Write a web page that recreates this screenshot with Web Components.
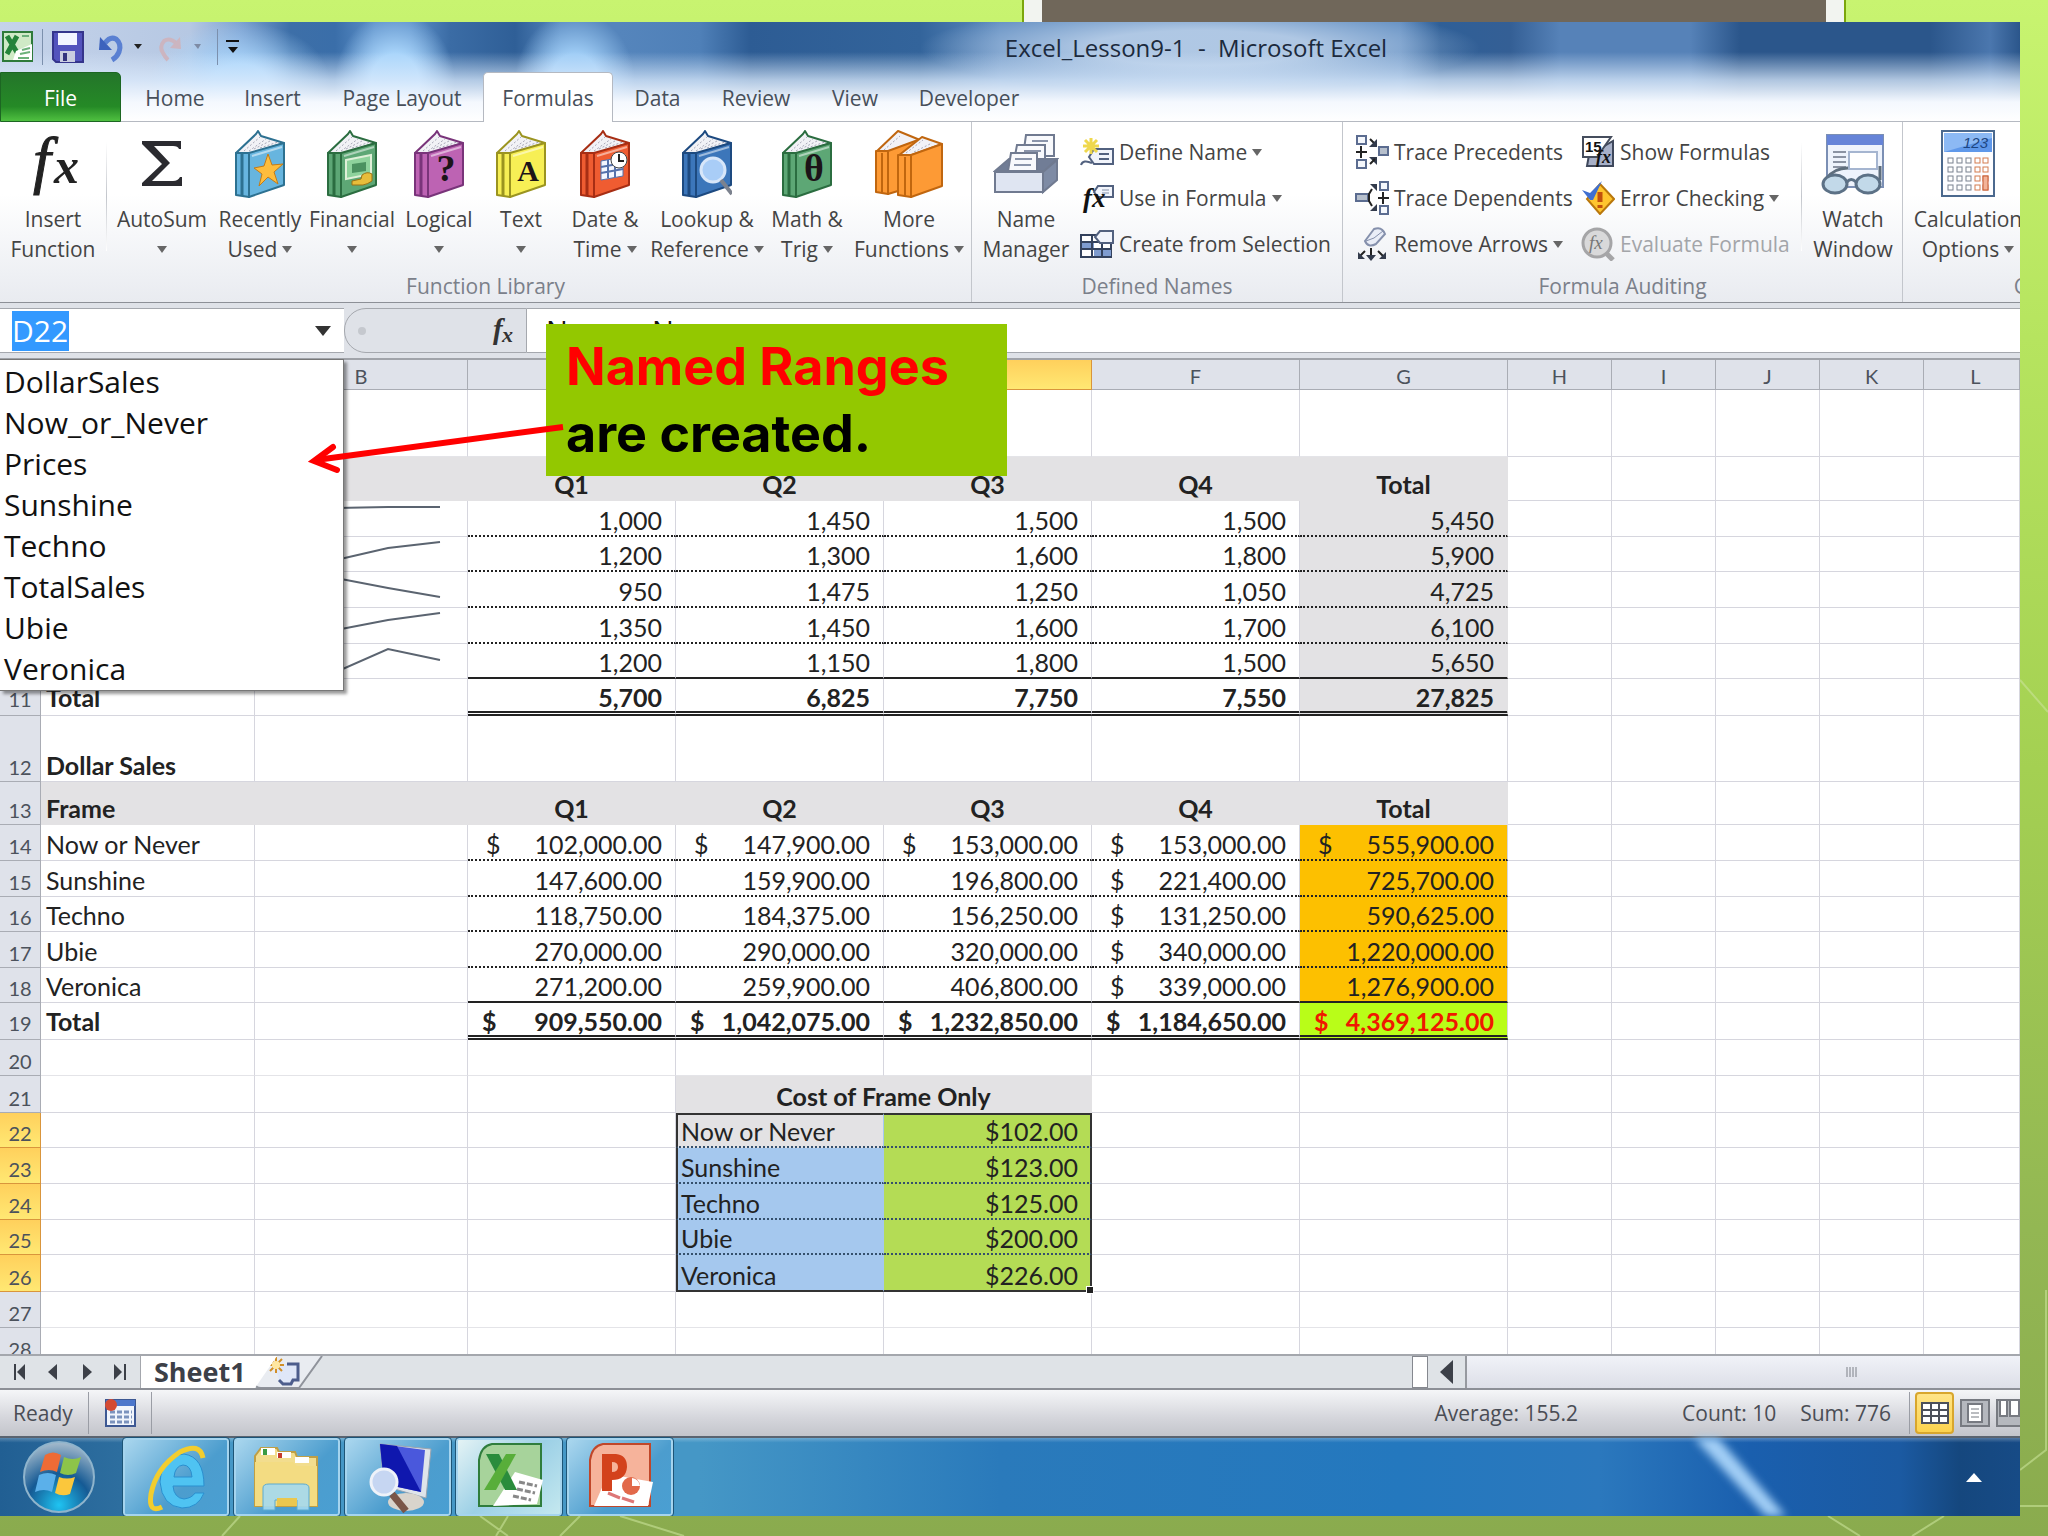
<!DOCTYPE html>
<html lang="en">
<head>
<meta charset="utf-8">
<title>Excel_Lesson9-1 - Microsoft Excel</title>
<style>
    body {
        margin: 0;
        font-family: "Open Sans", "Noto Sans", sans-serif;
        font-size: 21px;
        color: #444;
    }
</style>
</head>
<body>
<slide-stage>
    <title-bar></title-bar>
    <ribbon-panel>
        <ribbon-group label="Function Library">
            <ribbon-button icon="fx" label="Insert|Function" style="width: 106px"></ribbon-button>
            <ribbon-divider></ribbon-divider>
            <ribbon-button icon="sum" label="AutoSum|" menu style="width: 106px"></ribbon-button>
            <ribbon-button icon="recent" label="Recently|Used" menu style="width: 90px"></ribbon-button>
            <ribbon-button icon="financial" label="Financial|" menu style="width: 94px"></ribbon-button>
            <ribbon-button icon="logical" label="Logical|" menu style="width: 80px"></ribbon-button>
            <ribbon-button icon="text" label="Text|" menu style="width: 84px"></ribbon-button>
            <ribbon-button icon="date" label="Date &amp;|Time" menu style="width: 84px"></ribbon-button>
            <ribbon-button icon="lookup" label="Lookup &amp;|Reference" menu style="width: 120px"></ribbon-button>
            <ribbon-button icon="math" label="Math &amp;|Trig" menu style="width: 80px"></ribbon-button>
            <ribbon-button icon="more" label="More|Functions" menu style="width: 124px"></ribbon-button>
        </ribbon-group>
        <ribbon-group label="Defined Names">
            <ribbon-button icon="names" label="Name|Manager" style="width: 108px"></ribbon-button>
            <command-stack style="width: 262px">
                <ribbon-command icon="defineName" menu>Define Name</ribbon-command>
                <ribbon-command icon="useFormula" menu>Use in Formula</ribbon-command>
                <ribbon-command icon="createName">Create from Selection</ribbon-command>
            </command-stack>
        </ribbon-group>
        <ribbon-group label="Formula Auditing">
            <command-stack style="width: 238px; padding-left: 12px">
                <ribbon-command icon="precedents">Trace Precedents</ribbon-command>
                <ribbon-command icon="dependents">Trace Dependents</ribbon-command>
                <ribbon-command icon="removeArrows" menu>Remove Arrows</ribbon-command>
            </command-stack>
            <command-stack style="width: 220px">
                <ribbon-command icon="showFormulas">Show Formulas</ribbon-command>
                <ribbon-command icon="errorCheck" menu>Error Checking</ribbon-command>
                <ribbon-command icon="evaluate" disabled>Evaluate Formula</ribbon-command>
            </command-stack>
            <ribbon-divider></ribbon-divider>
            <ribbon-button icon="watch" label="Watch|Window" style="width: 98px"></ribbon-button>
        </ribbon-group>
        <ribbon-group label="Calculation" style="width: 330px">
            <ribbon-button icon="calc" label="Calculation|Options" menu style="width: 130px"></ribbon-button>
        </ribbon-group>
    </ribbon-panel>
    <formula-bar></formula-bar>
    <work-sheet></work-sheet>
    <sheet-tabs></sheet-tabs>
    <status-bar></status-bar>
    <task-bar></task-bar>
    <slide-callout slot="overlay"><span slot="lead">Named Ranges</span> are created.</slide-callout>
</slide-stage>

<script>
// Book icon shared by the function library buttons
const book = (front, side, inner = '') => `
    <svg width="50" height="68" viewBox="-1 -1 50 68">
        <path d="M0 22 20 3 22 0 25 5 48 12 14 23Z" fill="#f2f2f6" stroke="${side}" stroke-width="2" stroke-linejoin="round"/>
        <path d="M8 20 24 6M13 20 30 8M18 18 36 9M24 17 42 11" stroke="#a9a9b8" stroke-dasharray="2 2"/>
        <path d="M0 22H13V66L0 64Z" fill="${front}" stroke="${side}" stroke-width="2" stroke-linejoin="round"/>
        <path d="M6 23V65" stroke="${side}" stroke-width="3"/>
        <path d="M13 22 48 12V54L13 66Z" fill="${front}" stroke="${side}" stroke-width="2" stroke-linejoin="round"/>
        <path d="M16 25 46 16" stroke="#fff" stroke-opacity=".5" stroke-width="2"/>
        ${inner}
    </svg>`;

const glyph = (ch, size = 30) =>
    `<text x="31" y="50" font-family="Liberation Serif, serif" font-weight="bold" font-size="${size}" text-anchor="middle" fill="#1c1418">${ch}</text>`;

const ICONS = {
    fx: `<svg width="64" height="68" viewBox="0 0 64 68"><text x="12" y="51" font-family="Liberation Serif, serif" font-style="italic" font-size="64" fill="#222" stroke="#222" stroke-width="1">f</text><text x="33" y="53" font-family="Liberation Serif, serif" font-style="italic" font-weight="bold" font-size="50" fill="#222">x</text></svg>`,
    sum: `<svg width="44" height="68" viewBox="0 0 44 68"><path d="M2 11H41V19H39Q38 16 33 16H14L30 33 12 51H33Q38 51 40 47H42V56H2V53L22 34 2 14Z" fill="#2b2b30"/></svg>`,
    recent: book('#67b5df', '#2d7191', '<path d="m32 23 4 11 11-1-9 8 4 12-10-7-9 9 3-12-8-6 10-2z" fill="#fdbd3d" stroke="#c27b18"/>'),
    financial: book('#5da775', '#2b6d40', '<path d="M18 29 43 24V43L18 48Z" fill="#8ed29c" stroke="#dff0d8" stroke-width="2"/><path d="M24 33 38 31V40L24 42Z" fill="#4b9160"/><path d="M34 44q5-4 10-1v7q-4 3-9 4H24v-4l9-2z" fill="#e8bd3b" stroke="#9b7115"/>'),
    logical: book('#bd63b3', '#79347a', glyph('?', 38)),
    text: book('#f7ef55', '#9b9420', glyph('A')),
    date: book('#ef5c31', '#a72e14', '<path d="M20 30 42 26V45L20 49Z" fill="#f4f6ff" stroke="#5571ac"/><path d="M20 36 42 32M20 42 42 38M27 29V47M34 28V46" stroke="#5571ac" stroke-width="2"/><circle cx="38" cy="29" r="8" fill="#fff" stroke="#444"/><path d="M38 23V30H43" fill="none" stroke="#222" stroke-width="2"/>'),
    lookup: book('#3c76ba', '#1d4a80', '<circle cx="30" cy="39" r="12" fill="#a9cdf7" stroke="#d7e6f9" stroke-width="3"/><path d="m38 49 11 14" stroke="#7c828e" stroke-width="4"/>'),
    math: book('#5da775', '#2b6d40', glyph('θ', 38)),
    more: `<svg width="68" height="68" viewBox="-1 -1 68 68"><g fill="#fd9a35" stroke="#c0660f" stroke-width="2" stroke-linejoin="round"><path d="M0 21 22 0 44 9 14 20Z" fill="#f2f2f6"/><path d="M0 20H12V63L0 61Z"/><path d="M12 20 42 9V54L12 63Z"/><path d="M22 25 46 6 66 13 36 24Z" fill="#f2f2f6"/><path d="M22 24H35V66L22 64Z"/><path d="M35 24 66 13V55L35 66Z"/></g><path d="M6 22V61M29 26V65" stroke="#c0660f" stroke-width="2"/><path d="M8 19 24 5M30 22 47 9M38 21 56 12" stroke="#a9a9b8" stroke-dasharray="2 2"/></svg>`,
    names: `<svg width="66" height="68" viewBox="0 0 66 68"><g fill="#f8f9fc" stroke="#707a90" stroke-width="2"><path d="M33 5H61V26H30Z"/><path d="M24 15H52V36H20Z"/><path d="M2 41 16 29H64L52 41Z" fill="#717d96"/><path d="M18 23H44V41H15Z"/><path d="M2 42H50V62H2Z" fill="#dfe5f2"/><path d="M50 42 64 30V50L50 62Z" fill="#7e8ba5"/></g><path d="M22 29H39M21 35H38M31 21H48M39 11H55" stroke="#8a94aa" stroke-width="2"/></svg>`,
    watch: `<svg width="66" height="68" viewBox="0 0 66 68"><rect x="7" y="5" width="56" height="52" fill="#eef3fc" stroke="#7b8fb4" stroke-width="2"/><path d="M7 5H63V15H7Z" fill="#6684d8"/><path d="M13 22H26M13 27H26M13 32H26M13 37H26" stroke="#8b93a3" stroke-width="2"/><rect x="29" y="22" width="28" height="17" fill="#fff" stroke="#a5b5d0" stroke-width="2"/><path d="M6 49Q14 38 28 38M60 50V36" fill="none" stroke="#5f6e7d" stroke-width="3"/><g fill="#c2d9e9" stroke="#5c7186" stroke-width="3"><ellipse cx="15" cy="54" rx="12" ry="9"/><ellipse cx="48" cy="54" rx="12" ry="9"/><path d="M27 52Q31 47 36 52" fill="none"/></g></svg>`,
    calc: `<svg width="54" height="68" viewBox="0 0 54 68"><rect x="1" y="1" width="52" height="65" fill="#fdfdff" stroke="#4b698e" stroke-width="2"/><path d="M3 3H51V22H3Z" fill="#8cb9f4"/><path d="M3 22 51 8V22Z" fill="#5f98ea"/><text x="22" y="18" font-family="Liberation Sans, sans-serif" font-style="italic" font-size="15" fill="#1e4580">123</text><g fill="#fff" stroke="#7a8290" stroke-width="1">${[28, 37, 46, 55].map(y => [7, 16, 25, 34, 42].map(x => `<rect x="${x}" y="${y}" width="5" height="5" ${x > 30 ? 'stroke="#d47c50"' : ''}/>`).join('')).join('')}</g><rect x="42" y="46" width="5" height="14" fill="#f3b398" stroke="#c55a32"/></svg>`,
    defineName: `<svg width="34" height="30" viewBox="0 0 34 30"><path d="M14 12H33V27H14L9 20Z" fill="#f1f4fb" stroke="#52617f" stroke-width="2"/><path d="M19 17H29M19 22H29M1 28Q3 22 12 26" fill="none" stroke="#52617f" stroke-width="2"/><path d="M11 1V17M3 9H19M5 3 17 15M17 3 5 15" stroke="#efd84e" stroke-width="3"/></svg>`,
    useFormula: `<svg width="34" height="30" viewBox="0 0 34 30"><path d="M18 3H33V14H18L14 9Z" fill="#f1f4fb" stroke="#52617f" stroke-width="2"/><path d="M22 7H29M22 10H29" stroke="#8490a8"/><text x="3" y="24" font-family="Liberation Serif, serif" font-style="italic" font-weight="bold" font-size="27" fill="#111">fx</text></svg>`,
    createName: `<svg width="34" height="30" viewBox="0 0 34 30"><path d="M1 6H31V28H1Z" fill="#fff" stroke="#34425d" stroke-width="2"/><path d="M2 12H14V20H2ZM14 20H31V27H14Z" fill="#7f9ccf"/><path d="M1 13H31M1 20H31M12 6V28M22 6V28" stroke="#34425d" stroke-width="2"/><path d="M20 2H33V14H20L15 8Z" fill="#f1f4fb" stroke="#52617f" stroke-width="2"/></svg>`,
    precedents: `<svg width="34" height="34" viewBox="0 0 34 34"><g fill="#f4f7fc" stroke="#5b6c90" stroke-width="2"><path d="M2 1H11V9H2ZM2 25H11V33H2Z"/><path d="M24 12H33V20H24Z" fill="#b6bfcc"/></g><path d="M6 11V23M1 17H12M15 4 20 9" stroke="#222" stroke-width="2"/><path d="M22 4V12H14ZM22 30V22H14Z" fill="#333b4c"/><path d="M15 29 20 24" stroke="#222" stroke-width="2"/></svg>`,
    dependents: `<svg width="34" height="34" viewBox="0 0 34 34"><g fill="#f4f7fc" stroke="#5b6c90" stroke-width="2"><path d="M25 1H33V9H25ZM25 25H33V33H25Z"/><path d="M1 13H13V20H1Z" fill="#b6bfcc"/></g><path d="M28 11V23M23 17H34M17 8 14 13V20L17 25" fill="none" stroke="#222" stroke-width="2"/><path d="M22 3V10L15 3ZM22 30V23L15 30Z" fill="#333b4c"/></svg>`,
    removeArrows: `<svg width="34" height="34" viewBox="0 0 34 34"><path d="M10 14 19 2Q27-1 30 7L21 17Q13 21 10 14Z" fill="#e9edf7" stroke="#8590ac" stroke-width="2"/><path d="M11 14 19 11 28 4" fill="none" stroke="#8590ac"/><path d="M10 24 5 29M16 21V31M23 24 28 29" stroke="#222" stroke-width="2"/><path d="M3 25V32H10ZM11 28H21L16 34ZM31 25V32H24Z" fill="#333b4c"/></svg>`,
    showFormulas: `<svg width="34" height="34" viewBox="0 0 34 34"><path d="M8 20 32 6V31H6Z" fill="#a7b0c8" stroke="#3f485c" stroke-width="2"/><path d="M2 2H30L16 22H2Z" fill="#fff" stroke="#454d5d" stroke-width="2"/><text x="4" y="17" font-family="Liberation Sans, sans-serif" font-weight="bold" font-size="15" fill="#111">15</text><text x="15" y="28" font-family="Liberation Serif, serif" font-style="italic" font-weight="bold" font-size="18" fill="#111">fx</text></svg>`,
    errorCheck: `<svg width="34" height="34" viewBox="0 0 34 34"><path d="M19 3 33 18 19 33 6 18Z" fill="#ffc52e" stroke="#b9770c" stroke-width="2"/><path d="M19 11V21M19 24V27" stroke="#c2500c" stroke-width="5"/><path d="M1 9 9 12 21 0 12 19H9Z" fill="#3f6fd0"/></svg>`,
    evaluate: `<svg width="34" height="34" viewBox="0 0 34 34"><circle cx="16" cy="16" r="14" fill="#d9d9da" stroke="#a5a5a7" stroke-width="3"/><path d="m26 27 6 6" stroke="#a5a5a7" stroke-width="5"/><text x="8" y="22" font-family="Liberation Serif, serif" font-style="italic" font-size="19" fill="#777">fx</text></svg>`,
    caret: `<svg width="10" height="7" viewBox="0 0 10 7"><path d="M0 0H10L5 7Z" fill="#666"/></svg>`
};

class SlideStage extends HTMLElement {
    constructor() {
        super();
        this.attachShadow({ mode: 'open' });
    }

    connectedCallback() {
        this.shadowRoot.innerHTML = `
            <style>
                :host {
                    display: flex;
                    box-sizing: border-box;
                    height: 100vh;
                    padding: 22px 28px 20px 0;
                    position: relative;
                    overflow: hidden;
                    background: linear-gradient(#c8f470 0, #b6e45f 22%, #a4d052 50%, #93b753 80%, #8aab4e);
                }
                .tab {
                    position: absolute;
                    top: 0;
                    left: 1024px;
                    width: 784px;
                    height: 22px;
                    background: #70675a;
                    border: solid #f2f4f0;
                    border-width: 0 18px;
                    outline: 2px solid #7ba60c;
                }
                .lines {
                    position: absolute;
                    inset: 0;
                    width: 100%;
                    height: 100%;
                }
                .window {
                    flex: 1;
                    min-width: 0;
                    display: flex;
                    flex-direction: column;
                    overflow: hidden;
                    position: relative;
                    background: #fff;
                }
            </style>
            <svg class="lines" preserveAspectRatio="none" viewBox="0 0 2048 1536" fill="none" stroke="#c9e29a" stroke-opacity=".6" stroke-width="2">
                <path d="M2020 680 2048 712M2020 1470 2046 1450V1290M2020 1506H2048M240 1516 222 1536M480 1516 508 1536M580 1516 560 1536M620 1516 684 1536M508 1516 496 1536M1828 1516 1860 1536M1944 1516 1912 1536"/>
            </svg>
            <div class="tab"></div>
            <main class="window"><slot></slot></main>
            <slot name="overlay"></slot>
        `;
    }
}

class TitleBar extends HTMLElement {
    constructor() {
        super();
        this.attachShadow({ mode: 'open' });
    }

    connectedCallback() {
        const tabs = ['Home', 'Insert', 'Page Layout', 'Formulas', 'Data', 'Review', 'View', 'Developer'];
        this.shadowRoot.innerHTML = `
            <style>
                :host {
                    display: block;
                    flex: none;
                    background:
                        linear-gradient(transparent 30%, rgba(220, 235, 252, .75) 58%, #f4f8fe 80%, #fff),
                        radial-gradient(ellipse 280px 44px at 1200px 26px, rgba(184, 206, 232, .9) 40%, transparent),
                        radial-gradient(ellipse 90px 60px at 240px 60px, #a9d5fb 30%, transparent),
                        radial-gradient(ellipse 60px 70px at 395px 60px, #a9d5fb 40%, transparent),
                        radial-gradient(ellipse 60px 70px at 575px 60px, #9fcdf6 40%, transparent),
                        linear-gradient(90deg, #c5d3ea 0, #b6c8e3 190px, #7fa3d2 240px, #3d6fa8 290px, #3a6ea9 335px, #5c8fc8 375px, #5c8fc8 410px, #3b6ca5 450px, #2f5f97 515px, #5585bc 560px, #5585bc 620px, #4f80b8 700px, #2d5c94 750px, #33649b 920px, #5f8cc0 1000px, #5f8cc0 1400px, #2f5f97 1440px, #345f95 1510px, #5682b8 1560px, #5682b8 1690px, #2b568b 1740px, #2b568b 1930px, #4b77ae 1990px, #2b568b);
                }
                header {
                    height: 50px;
                    display: grid;
                    grid-template-columns: 1fr auto 1fr;
                    align-items: center;
                }
                .quick, nav { display: flex; align-items: center; }
                .quick { gap: 8px; padding-left: 2px; }
                h1 {
                    margin: 0;
                    padding: 0 0 0 372px;
                    font-size: 24px;
                    font-weight: 400;
                    color: #1c2a3d;
                    white-space: pre;
                }
                button {
                    border: 0;
                    padding: 0;
                    background: none;
                    font: inherit;
                    color: inherit;
                    display: flex;
                }
                hr { width: 1px; height: 36px; margin: 0; border: 0; background: #7c90ad; }
                nav { height: 50px; border-bottom: 1px solid #b5b9c1; box-sizing: border-box; color: #474f5a; }
                nav button { height: 50px; padding-top: 2px; align-items: center; justify-content: center; box-sizing: border-box; }
                .file {
                    width: 121px;
                    margin-right: 5px;
                    color: #fff;
                    background: linear-gradient(#24752a, #258a26 70%, #4fc040);
                    border: 1px solid #1c6622;
                    border-radius: 0 5px 0 0;
                }
                .active {
                    background: #fff;
                    border: 1px solid #b5b9c1;
                    border-bottom: 0;
                    border-radius: 5px 5px 0 0;
                }
            </style>
            <header>
                <div class="quick">
                    <svg width="32" height="34" viewBox="0 0 32 34"><rect x="1" y="2" width="29" height="29" fill="#cfeac6" stroke="#2e7a3a" stroke-width="2"/><path d="M5 6 16 24M15 6 5 24" stroke="#24843a" stroke-width="5"/><path d="M14 21 30 14V30H11Z" fill="#fff"/><path d="M20 6H27M20 20 28 18M18 24 28 22M16 28H27" stroke="#6bb07a" stroke-width="2"/></svg>
                    <hr>
                    <button aria-label="Save"><svg width="34" height="34" viewBox="0 0 34 34"><path d="M2 2H32V32H5L2 29Z" fill="#5353bd" stroke="#35358c" stroke-width="2"/><path d="M7 3H26V15H7Z" fill="#f2f4ff"/><path d="M9 21H24V32H9Z" fill="#c9cde0"/><path d="M12 23H16V31H12Z" fill="#34347f"/></svg></button>
                    <button aria-label="Undo"><svg width="52" height="34" viewBox="0 0 52 34"><path d="M12 13Q17 6 23 9 29 14 26 22 24 27 19 30" fill="none" stroke="#5a80d2" stroke-width="5"/><path d="M6 20 7 7 19 20Z" fill="#3d62bd"/><path d="M41 14H49L45 19Z" fill="#222"/></svg></button>
                    <button aria-label="Redo"><svg width="56" height="34" viewBox="0 0 56 34"><path d="M24 14Q17 7 11 11 6 17 10 23 12 27 15 30" fill="none" stroke="#ccb5c0" stroke-width="4"/><path d="M28 19 27 7 17 18Z" fill="#ccb5c0"/><path d="M41 14H48L45 19Z" fill="#7e8ba5"/></svg></button>
                    <hr>
                    <button aria-label="Customize"><svg width="14" height="14" viewBox="0 0 14 14"><path d="M0 1H13" stroke="#111" stroke-width="2"/><path d="M2 7H12L7 13Z" fill="#111"/></svg></button>
                </div>
                <h1>Excel_Lesson9-1  -  Microsoft Excel</h1>
                <span></span>
            </header>
            <nav>
                <button class="file">File</button>
                ${tabs.map((tab, i) => `<button class="${tab === 'Formulas' ? 'active' : ''}" style="width: ${[98, 97, 162, 130, 89, 108, 90, 138][i]}px">${tab}</button>`).join('')}
            </nav>
        `;
    }
}

class RibbonPanel extends HTMLElement {
    constructor() {
        super();
        this.attachShadow({ mode: 'open' });
    }

    connectedCallback() {
        this.shadowRoot.innerHTML = `
            <style>
                :host {
                    display: flex;
                    flex: none;
                    height: 181px;
                    box-sizing: border-box;
                    overflow: hidden;
                    background: linear-gradient(#fff 40%, #eef0f4 85%, #e9ebf0);
                    border-bottom: 1px solid #8d9097;
                }
            </style>
            <slot></slot>
        `;
    }
}

class RibbonGroup extends HTMLElement {
    constructor() {
        super();
        this.attachShadow({ mode: 'open' });
    }

    connectedCallback() {
        this.shadowRoot.innerHTML = `
            <style>
                :host {
                    display: flex;
                    flex-direction: column;
                    flex: none;
                    border-right: 1px solid #c3c6cc;
                }
                .items { display: flex; height: 149px; }
                .label { text-align: center; line-height: 30px; color: #7b808a; }
            </style>
            <div class="items"><slot></slot></div>
            <div class="label">${this.getAttribute('label')}</div>
        `;
    }
}

class RibbonDivider extends HTMLElement {
    constructor() {
        super();
        this.attachShadow({ mode: 'open' });
        this.shadowRoot.innerHTML = `
            <style>
                :host { display: block; width: 1px; margin: 20px 2px 20px 0; background: linear-gradient(#fff, #c3c6cc, #fff); }
            </style>
        `;
    }
}

class RibbonButton extends HTMLElement {
    constructor() {
        super();
        this.attachShadow({ mode: 'open' });
    }

    connectedCallback() {
        const [first, second] = this.getAttribute('label').split('|');
        const caret = this.hasAttribute('menu') ? ICONS.caret : '';
        this.shadowRoot.innerHTML = `
            <style>
                :host { display: block; flex: none; }
                button {
                    width: 100%;
                    border: 0;
                    padding: 8px 0 0;
                    background: none;
                    font: inherit;
                    color: #444;
                    line-height: 30px;
                    white-space: nowrap;
                    display: flex;
                    flex-direction: column;
                    align-items: center;
                }
                .icon { height: 74px; display: flex; }
                .icon svg { display: block; }
                .second { display: flex; align-items: center; gap: 5px; min-height: 30px; }
            </style>
            <button>
                <span class="icon">${ICONS[this.getAttribute('icon')]}</span>
                <span>${first.replace('&', '&amp;')}</span>
                <span class="second">${second}${caret}</span>
            </button>
        `;
    }
}

class CommandStack extends HTMLElement {
    constructor() {
        super();
        this.attachShadow({ mode: 'open' });
        this.shadowRoot.innerHTML = `
            <style>
                :host { display: flex; flex-direction: column; flex: none; box-sizing: border-box; padding-top: 7px; }
            </style>
            <slot></slot>
        `;
    }
}

class RibbonCommand extends HTMLElement {
    constructor() {
        super();
        this.attachShadow({ mode: 'open' });
    }

    connectedCallback() {
        const disabled = this.hasAttribute('disabled');
        this.shadowRoot.innerHTML = `
            <style>
                :host { display: block; }
                button {
                    display: flex;
                    align-items: center;
                    gap: 5px;
                    height: 46px;
                    border: 0;
                    padding: 0;
                    background: none;
                    font: inherit;
                    color: ${disabled ? '#a3a5a9' : '#444'};
                    white-space: nowrap;
                }
            </style>
            <button ${disabled ? 'disabled' : ''}>
                ${ICONS[this.getAttribute('icon')]}
                <slot></slot>
                ${this.hasAttribute('menu') ? ICONS.caret : ''}
            </button>
        `;
    }
}

class FormulaBar extends HTMLElement {
    constructor() {
        super();
        this.attachShadow({ mode: 'open' });
    }

    connectedCallback() {
        const names = ['DollarSales', 'Now_or_Never', 'Prices', 'Sunshine', 'Techno', 'TotalSales', 'Ubie', 'Veronica'];
        this.shadowRoot.innerHTML = `
            <style>
                :host {
                    display: flex;
                    flex: none;
                    height: 57px;
                    box-sizing: border-box;
                    padding: 5px 0;
                    position: relative;
                    z-index: 1;
                    font-size: 30px;
                    color: #111;
                    background: #dfe2e8;
                    border-bottom: 2px solid #a0a3a9;
                }
                .name, .tools, .formula {
                    box-sizing: border-box;
                    border: solid #a5a8ae;
                    border-width: 1px 0;
                    background: #fff;
                    display: flex;
                    align-items: center;
                }
                .name { width: 344px; padding: 0 13px 0 12px; justify-content: space-between; }
                input { border: 0; padding: 0; font: inherit; color: inherit; background: none; min-width: 0; }
                .name input { width: 57px; height: 40px; background: #3399ff; color: #fff; }
                button { border: 0; padding: 0; background: none; display: flex; }
                .tools {
                    width: 183px;
                    background: #dfe2e8;
                    border-left-width: 1px;
                    border-right-width: 1px;
                    border-radius: 22px 0 0 22px;
                    padding: 0 10px 0 12px;
                    justify-content: space-between;
                }
                .formula { flex: 1; padding-left: 19px; }
                .formula input { flex: 1; font-size: 29px; }
                ul {
                    position: absolute;
                    left: 0;
                    top: 56px;
                    width: 343px;
                    margin: 0;
                    padding: 1px 0;
                    list-style: none;
                    background: #fff;
                    border: 1px solid #777;
                    border-left: 0;
                    box-shadow: 3px 3px 3px rgba(0, 0, 0, .4);
                }
                li { line-height: 41px; padding-left: 4px; }
            </style>
            <div class="name">
                <input aria-label="Name Box" value="D22">
                <button aria-label="Open name list"><svg width="16" height="10" viewBox="0 0 16 10"><path d="M0 0H16L8 10Z" fill="#333"/></svg></button>
            </div>
            <div class="tools">
                <svg width="10" height="10" viewBox="0 0 10 10"><circle cx="5" cy="5" r="4" fill="#c5c8ce"/></svg>
                <button aria-label="Insert Function"><svg width="28" height="32" viewBox="0 0 28 32"><text x="5" y="24" font-family="Liberation Serif, serif" font-style="italic" font-weight="bold" font-size="29" fill="#333">f</text><text x="14" y="27" font-family="Liberation Serif, serif" font-style="italic" font-weight="bold" font-size="22" fill="#333">x</text></svg></button>
            </div>
            <div class="formula"><input aria-label="Formula" value="Now or Never"></div>
            <ul role="listbox" aria-label="Names">${names.map(name => `<li role="option">${name}</li>`).join('')}</ul>
        `;
    }
}

// One entry per sheet row: number, height, style of the row, cells A to G
const ROWS = [
    ['', 67, 'blank', []],
    ['', 44, 'head', ['', '', 'Q1', 'Q2', 'Q3', 'Q4', 'Total']],
    ['', 36, 'units', ['', '29,8 81,7 133,6 185,6', '1,000', '1,450', '1,500', '1,500', '5,450']],
    ['', 35, 'units', ['', '29,27 81,23 133,11 185,5', '1,200', '1,300', '1,600', '1,800', '5,900']],
    ['', 36, 'units', ['', '29,20 81,6 133,16 185,25', '950', '1,475', '1,250', '1,050', '4,725']],
    ['', 36, 'units', ['', '29,26 81,22 133,12 185,5', '1,350', '1,450', '1,600', '1,700', '6,100']],
    ['', 35, 'units last', ['', '29,27 81,28 133,5 185,16', '1,200', '1,150', '1,800', '1,500', '5,650']],
    ['11', 37, 'sum', ['Total', '', '5,700', '6,825', '7,750', '7,550', '27,825']],
    ['12', 66, 'title', ['Dollar Sales']],
    ['13', 43, 'head', ['Frame', '', 'Q1', 'Q2', 'Q3', 'Q4', 'Total']],
    ['14', 36, 'money', ['Now or Never', '', '$102,000.00', '$147,900.00', '$153,000.00', '$153,000.00', '$555,900.00']],
    ['15', 36, 'money', ['Sunshine', '', '147,600.00', '159,900.00', '196,800.00', '$221,400.00', '725,700.00']],
    ['16', 35, 'money', ['Techno', '', '118,750.00', '184,375.00', '156,250.00', '$131,250.00', '590,625.00']],
    ['17', 36, 'money', ['Ubie', '', '270,000.00', '290,000.00', '320,000.00', '$340,000.00', '1,220,000.00']],
    ['18', 35, 'money last', ['Veronica', '', '271,200.00', '259,900.00', '406,800.00', '$339,000.00', '1,276,900.00']],
    ['19', 37, 'sum money-sum', ['Total', '', '$909,550.00', '$1,042,075.00', '$1,232,850.00', '$1,184,650.00', '$4,369,125.00']],
    ['20', 36, 'blank', []],
    ['21', 37, 'cost-title', ['', '', '', 'Cost of Frame Only']],
    ['22', 35, 'cost first', ['', '', '', 'Now or Never', '$102.00']],
    ['23', 36, 'cost', ['', '', '', 'Sunshine', '$123.00']],
    ['24', 36, 'cost', ['', '', '', 'Techno', '$125.00']],
    ['25', 35, 'cost', ['', '', '', 'Ubie', '$200.00']],
    ['26', 37, 'cost end', ['', '', '', 'Veronica', '$226.00']],
    ['27', 36, 'blank', []],
    ['28', 36, 'blank', []]
];

class WorkSheet extends HTMLElement {
    constructor() {
        super();
        this.attachShadow({ mode: 'open' });
    }

    connectedCallback() {
        this.render();
    }

    cell(kind, value, col) {
        const letter = 'ABCDEFGHIJKL'[col];
        if (kind === 'cost-title' && letter === 'E') return '';
        const span = kind === 'cost-title' && letter === 'D' ? ' colspan="2"' : '';
        let content = value;
        if (letter === 'B' && value) {
            content = `<svg width="212" height="30" viewBox="0 0 212 30"><polyline points="${value}" fill="none" stroke="#5b6470" stroke-width="2"/></svg>`;
        } else if (kind.includes('money') && value.startsWith('$')) {
            content = `<div class="accounting"><span>$</span><span>${value.slice(1)}</span></div>`;
        }
        if (kind === 'cost end' && letter === 'E') content += '<i class="handle"></i>';
        return `<td class="${letter}"${span}>${content}</td>`;
    }

    render() {
        const widths = [41, 214, 213, 208, 208, 208, 208, 208, 104, 104, 104, 104];
        const letters = ['', 'B', '', '', '', 'F', 'G', 'H', 'I', 'J', 'K', 'L'];
        this.shadowRoot.innerHTML = `
            <style>
                :host {
                    display: block;
                    flex: 1;
                    min-height: 0;
                    overflow: hidden;
                    font-family: Lato, "Open Sans", sans-serif;
                    font-size: 25px;
                    line-height: 28px;
                    color: #222;
                }
                table { width: 100%; table-layout: fixed; border-collapse: separate; border-spacing: 0; }
                th, td {
                    box-sizing: border-box;
                    border: solid #d6d6de;
                    border-width: 0 1px 1px 0;
                    padding: 0 0 2px;
                    vertical-align: bottom;
                    white-space: nowrap;
                }
                th {
                    background: #dfe2ea;
                    border-color: #a9acb4;
                    color: #4c525c;
                    font-size: 20px;
                    font-weight: 400;
                    line-height: 24px;
                }
                thead th { height: 30px; padding-bottom: 1px; }
                thead th:last-child { padding-left: 8px; }
                thead .sel, tbody .sel { background: linear-gradient(#ffd05c, #ffe873); border-color: #d9953c; }
                .A { padding-left: 5px; }
                .B { vertical-align: top; }
                .blank td:nth-child(-n+8) { border-bottom-color: #e4e4e8; }
                svg { display: block; }

                .head td:nth-child(-n+8) { background: #e3e2e4; border-color: #e3e2e4; font-weight: 700; text-align: center; }
                .title .A, .sum td { font-weight: 700; }
                .units td, .sum td, .money td { text-align: right; }
                tr .A.A.A { text-align: left; }
                .C, .D, .E, .F, .G { padding-right: 13px; }
                .head td, .cost-title td { padding-right: 0; }

                .units :is(.C, .D, .E, .F, .G), .money :is(.C, .D, .E, .F, .G) { border-bottom: 2px dotted #222; padding-bottom: 1px; }
                .last :is(.C, .D, .E, .F, .G) { border-bottom: 2px solid #222; }
                .sum :is(.C, .D, .E, .F, .G) { border-bottom: 5px double #222; padding-bottom: 0; }
                .sum > :is(th, .A) { padding-bottom: 4px; }
                .units .G, .units + .sum .G { background: #e3e2e4; border-right-color: #e3e2e4; }
                .money .G { background: #fdc000; }
                .money-sum .G { background: #b9fd18; color: #f01800; }
                .accounting { display: flex; justify-content: space-between; padding-left: 18px; }
                .money-sum .accounting { padding-left: 14px; }

                .cost-title .D { background: #e3e2e4; font-weight: 700; text-align: center; border-color: #e3e2e4; }
                .cost .D { background: #a5c8ee; border-left: 2px solid #333; border-right-color: #a5c8ee; padding-left: 3px; }
                .cost.first .D { background: #e3e2e4; }
                .cost .E { background: #b4dc55; text-align: right; border-right: 2px solid #333; padding-right: 12px; position: relative; }
                .cost :is(.D, .E) { border-bottom: 2px dotted #35506c; padding-bottom: 1px; }
                .first :is(.D, .E) { border-top: 2px solid #333; }
                .end :is(.D, .E) { border-bottom: 2px solid #333; }
                .handle { position: absolute; right: -4px; bottom: -4px; width: 6px; height: 6px; background: #222; border: 1px solid #fff; }
            </style>
            <table>
                <colgroup>${widths.map(w => `<col style="width: ${w}px">`).join('')}<col></colgroup>
                <thead>
                    <tr><th></th>${letters.map((l, i) => `<th class="${i === 3 || i === 4 ? 'sel' : ''}">${l}</th>`).join('')}</tr>
                </thead>
                <tbody>
                    ${ROWS.map(([number, height, kind, values]) => `
                        <tr class="${kind}" style="height: ${height}px">
                            <th class="${kind.startsWith('cost') && kind !== 'cost-title' ? 'sel' : ''}">${number}</th>
                            ${Array.from({ length: 12 }, (_, col) => this.cell(kind, values[col] || '', col)).join('')}
                        </tr>`).join('')}
                </tbody>
            </table>
        `;
    }
}

class SheetTabs extends HTMLElement {
    constructor() {
        super();
        this.attachShadow({ mode: 'open' });
    }

    connectedCallback() {
        const nav = [
            ['First', 'M1 0V16H3V0ZM12 0V16L4 8Z'],
            ['Previous', 'M11 0V16L2 8Z'],
            ['Next', 'M3 0V16L12 8Z'],
            ['Last', 'M1 0V16L9 8ZM11 0V16H13V0Z']
        ];
        this.shadowRoot.innerHTML = `
            <style>
                :host {
                    display: flex;
                    flex: none;
                    height: 36px;
                    box-sizing: border-box;
                    background: #dfe3e7;
                    border-top: 2px solid #a4a7ad;
                    border-bottom: 2px solid #8c8f96;
                }
                button { border: 0; padding: 0; background: none; font: inherit; color: #3c4048; display: flex; align-items: center; }
                .nav { display: flex; box-sizing: border-box; width: 141px; padding: 0 13px; justify-content: space-between; border-right: 1px solid #a4a7ad; }
                .tab {
                    width: 136px;
                    padding-left: 13px;
                    font-size: 27px;
                    line-height: 32px;
                    font-weight: 700;
                    background: #fff;
                    clip-path: polygon(0 0, 100% 0, calc(100% - 22px) 100%, 0 100%);
                }
                .new { margin-left: -24px; flex: 1; }
                .split { width: 14px; background: #fff; border: 1px solid #85888f; }
                .left { width: 37px; justify-content: center; }
                .track {
                    width: 555px;
                    display: flex;
                    align-items: center;
                    justify-content: center;
                    box-sizing: border-box;
                    padding-left: 216px;
                    background: linear-gradient(#f0f2f8, #dddfe8);
                    border-left: 2px solid #96999f;
                }
            </style>
            <div class="nav">${nav.map(([label, d]) => `<button aria-label="${label} sheet"><svg width="14" height="16" viewBox="0 0 14 16"><path d="${d}" fill="#3c4048"/></svg></button>`).join('')}</div>
            <button class="tab">Sheet1</button>
            <button class="new" aria-label="Insert Worksheet"><svg width="72" height="32" viewBox="0 0 72 32"><path d="M22 0 2 27Q2 32 8 32H46L69 0" fill="#e9ecf1" stroke="#8f939b" stroke-width="2"/><path d="M22 8H45V24H40L38 28H30L26 24 24 18Z" fill="#dfe7f8"/><path d="M34 8H45V24H40L38 28H30L26 24" fill="none" stroke="#4c5d8c" stroke-width="3"/><path d="M23 1V17M15 9H31M17 3 29 15M29 3 17 15" stroke="#d18f27" stroke-width="2"/><circle cx="23" cy="9" r="4" fill="#ffe7a0"/></svg></button>
            <div class="split"></div>
            <button class="left" aria-label="Scroll left"><svg width="13" height="24" viewBox="0 0 13 24"><path d="M13 0V24L0 12Z" fill="#3c4048"/></svg></button>
            <div class="track"><svg width="11" height="10" viewBox="0 0 11 10"><path d="M1 0V10M4 0V10M7 0V10M10 0V10" stroke="#7d8088"/></svg></div>
        `;
    }
}

class StatusBar extends HTMLElement {
    constructor() {
        super();
        this.attachShadow({ mode: 'open' });
    }

    connectedCallback() {
        this.shadowRoot.innerHTML = `
            <style>
                :host {
                    display: flex;
                    flex: none;
                    align-items: center;
                    height: 48px;
                    box-sizing: border-box;
                    overflow: hidden;
                    background: linear-gradient(#f5f6f8, #d5d6dc 60%, #c3c5cb);
                    border-bottom: 2px solid #5a6470;
                    color: #4a4d55;
                    white-space: nowrap;
                }
                hr { width: 1px; height: 42px; margin: 0; border: 0; background: #9a9da5; }
                .ready { width: 75px; padding-left: 13px; }
                button { border: 0; padding: 0; background: none; display: flex; align-items: center; justify-content: center; }
                .macro { width: 62px; }
                .stats { flex: 1; display: flex; justify-content: flex-end; padding-right: 18px; }
                .stats span:nth-child(1) { margin-right: 104px; }
                .stats span:nth-child(2) { margin-right: 24px; }
                .views { display: flex; width: 110px; gap: 6px; padding-left: 5px; box-sizing: border-box; overflow: hidden; }
                .views button { flex: none; height: 42px; }
                .on { width: 39px; box-sizing: border-box; border: 2px solid #d8a62d; border-radius: 4px; background: linear-gradient(#ffe487, #fcd34e); }
            </style>
            <span class="ready">Ready</span>
            <hr>
            <button class="macro" aria-label="Record Macro"><svg width="32" height="30" viewBox="0 0 32 30"><path d="M2 2H31V28H2Z" fill="#f1f5fc" stroke="#3d5893" stroke-width="2"/><path d="M2 2H31V8H2Z" fill="#4c77cc"/><path d="M6 14H28M6 19H28M6 24H28" stroke="#7c93bd" stroke-width="3" stroke-dasharray="5 2"/><circle cx="7" cy="7" r="6" fill="#d44b34"/></svg></button>
            <hr>
            <div class="stats"><span>Average: 155.2</span><span>Count: 10</span><span>Sum: 776</span></div>
            <hr>
            <div class="views">
                <button class="on" aria-label="Normal"><svg width="28" height="22" viewBox="0 0 28 22"><path d="M1 1H27V21H1ZM1 8H27M1 14H27M10 1V21M18 1V21" fill="#fff" stroke="#4c505a" stroke-width="2"/></svg></button>
                <button aria-label="Page Layout"><svg width="30" height="28" viewBox="0 0 30 28"><rect x="1" y="1" width="28" height="26" fill="#b5b8be" stroke="#777a81" stroke-width="2"/><rect x="8" y="5" width="14" height="18" fill="#fff" stroke="#777a81" stroke-width="2"/><path d="M11 10H19M11 14H19M11 18H19" stroke="#777a81"/></svg></button>
                <button aria-label="Page Break Preview"><svg width="30" height="28" viewBox="0 0 30 28"><rect x="1" y="1" width="28" height="26" fill="#b5b8be" stroke="#777a81" stroke-width="2"/><path d="M4 1H11V17H4ZM14 1H23V17H14Z" fill="#fff" stroke="#777a81" stroke-width="2"/></svg></button>
            </div>
        `;
    }
}

class TaskBar extends HTMLElement {
    constructor() {
        super();
        this.attachShadow({ mode: 'open' });
    }

    connectedCallback() {
        const apps = [
            ['Internet Explorer', '<path d="M66 46H35Q36 58 46 59 54 58 57 53H66Q60 68 44 68 24 66 22 42 24 16 46 14 66 17 66 46ZM36 37H54Q53 25 45 25 37 26 36 37Z" fill="#4fc3f2" stroke="#2a8fcf" fill-rule="evenodd"/><path d="M65 18Q62 2 42 12 18 28 13 54 10 74 24 67" fill="none" stroke="#f2cd2e" stroke-width="5"/>'],
            ['Windows Explorer', '<path d="M6 16 12 8H28L30 12H46L48 17H68V66H6Z" fill="#f2dd8e" stroke="#bf9f45" stroke-width="2"/><path d="M12 8H26V15H12ZM28 12H42V18H28ZM46 17H60V23H46Z" fill="#fff"/><path d="M16 9V15" stroke="#3a9b45" stroke-width="4"/><path d="M31 13V18" stroke="#c53b2b" stroke-width="4"/><path d="M6 22H44L48 26H68V66H6Z" fill="#f3dc82"/><path d="M14 48Q14 44 20 44H54Q60 44 60 48V70H48V60H26V70H14Z" fill="#a4d9f0" fill-opacity=".9" stroke="#5cabd0"/><path d="M28 58H48V66H28Z" fill="#eac74f"/>'],
            ['Magnifier', '<path d="M20 4 71 9 66 58 24 46Z" fill="#dfe4ea" stroke="#9aa4b0"/><path d="M20 4 65 10 61 52 24 44Z" fill="#4a58dc"/><path d="M20 4 37 6 61 52 24 44Z" fill="#0f17ae"/><ellipse cx="46" cy="62" rx="18" ry="9" fill="#d9d4cc"/><circle cx="24" cy="42" r="13" fill="#c6d6f2" stroke="#eef2f9" stroke-width="3"/><path d="m32 54 14 17" stroke="#7a5648" stroke-width="7"/>'],
            ['Excel', '<path d="M21 4H70V66H8V20Q10 6 21 4Z" fill="#a7d39b" stroke="#2f7d3c" stroke-width="2"/><path d="M44 32 72 40 66 64 22 66Z" fill="#fff"/><path d="M48 42 66 46M46 49 64 53M42 56 60 60" stroke="#888" stroke-width="3" stroke-dasharray="6 2"/><path d="M15 14H28L46 50H34Z" fill="#2a8c3c"/><path d="M45 14H35L13 50H25Z" fill="#58ae3a"/>'],
            ['PowerPoint', '<path d="M21 4H68V66H8V20Q10 6 21 4Z" fill="#f6b39b" stroke="#c0472a" stroke-width="2"/><path d="M26 34 71 42 66 66 12 66Z" fill="#fff"/><circle cx="49" cy="46" r="9" fill="#e2694a"/><path d="M50 46V38A9 9 0 0 1 58 46Z" fill="#fff"/><path d="M26 53 38 58M40 58 52 62" stroke="#d77" stroke-width="3"/><path d="M20 14H34Q45 15 45 27 44 40 30 40V51H20ZM30 22V32Q36 32 36 27 36 22 30 22Z" fill="#d3421c" fill-rule="evenodd"/>']
        ];
        this.shadowRoot.innerHTML = `
            <style>
                :host {
                    display: flex;
                    flex: none;
                    height: 78px;
                    background:
                        linear-gradient(rgba(255, 255, 255, .25), transparent 6%),
                        linear-gradient(90deg, #215f93 0, #2d6e9f 120px, #4597c6 200px, #4597c6 700px, #2a7abb 1000px, #2478be 1400px, #2b78bd 1600px, #1a5fae 1750px, #1b5aa2 1900px, #15477e 1960px, #174b86);
                }
                button { border: 0; padding: 0; background: none; display: flex; align-items: center; justify-content: center; box-sizing: border-box; }
                .start { width: 118px; }
                .app {
                    width: 106px;
                    margin-left: 5px;
                    border: 2px solid #a5d4ee;
                    border-radius: 3px;
                    outline: 1px solid #1d5577;
                    background: linear-gradient(135deg, #a9d6ee, #4c9dce 60%, #4a9fd2);
                }
                .app:nth-of-type(5) { background: linear-gradient(135deg, #e4f3f5, #9cd0e6 50%, #c4e8ef); }
                .streak { margin-left: auto; margin-right: 134px; filter: blur(4px); }
                .tray { width: 92px; }
            </style>
            <button class="start" aria-label="Start"><svg width="76" height="74" viewBox="0 0 76 74">
                <defs><radialGradient id="orb" cx=".5" cy=".9" r=".9"><stop offset="0" stop-color="#1fc4f2"/><stop offset=".5" stop-color="#155a94"/><stop offset="1" stop-color="#a7bccd"/></radialGradient></defs>
                <ellipse cx="38" cy="37" rx="35" ry="35" fill="url(#orb)" stroke="#8fb4cc" stroke-width="2"/>
                <path d="M24 15Q32 10 40 15L36 32Q28 28 19 32Z" fill="#ee6b35"/><path d="M43 17Q52 21 60 17L55 33Q47 37 39 33Z" fill="#8dc449"/>
                <path d="M18 35Q27 31 35 35L31 52Q23 48 14 52Z" fill="#5bb0ea"/><path d="M38 37Q46 40 54 37L49 54Q41 57 34 53Z" fill="#fbc73c"/>
            </svg></button>
            ${apps.map(([label, art]) => `<button class="app" aria-label="${label}"><svg width="76" height="74" viewBox="0 0 76 74">${art}</svg></button>`).join('')}
            <svg class="streak" width="110" height="78" viewBox="0 0 110 78"><path d="M10 0H34L102 78H82Z" fill="#a3cff6"/></svg>
            <button class="tray" aria-label="Show hidden icons"><svg width="16" height="9" viewBox="0 0 16 9"><path d="M8 0 16 9H0Z" fill="#fff"/></svg></button>
        `;
    }
}

class SlideCallout extends HTMLElement {
    constructor() {
        super();
        this.attachShadow({ mode: 'open' });
    }

    connectedCallback() {
        this.shadowRoot.innerHTML = `
            <style>
                :host {
                    position: absolute;
                    left: 546px;
                    top: 324px;
                    width: 461px;
                    box-sizing: border-box;
                    padding: 9px 16px 9px 20px;
                    z-index: 2;
                    background: #93c800;
                    font: 700 52px/67px Inter, Lato, sans-serif;
                    color: #000;
                }
                ::slotted([slot="lead"]) { display: block; color: #f00; }
                svg { position: absolute; left: -246px; top: 92px; }
            </style>
            <slot name="lead"></slot><slot></slot>
            <svg width="266" height="60" viewBox="0 0 266 60" fill="none" stroke="#f00" stroke-width="6">
                <path d="M263 11 16 44"/>
                <path d="M33 31 14 45 37 54" stroke-width="6" stroke-linecap="round"/>
            </svg>
        `;
    }
}

customElements.define('slide-stage', SlideStage);
customElements.define('title-bar', TitleBar);
customElements.define('ribbon-panel', RibbonPanel);
customElements.define('ribbon-group', RibbonGroup);
customElements.define('ribbon-divider', RibbonDivider);
customElements.define('ribbon-button', RibbonButton);
customElements.define('command-stack', CommandStack);
customElements.define('ribbon-command', RibbonCommand);
customElements.define('formula-bar', FormulaBar);
customElements.define('work-sheet', WorkSheet);
customElements.define('sheet-tabs', SheetTabs);
customElements.define('status-bar', StatusBar);
customElements.define('task-bar', TaskBar);
customElements.define('slide-callout', SlideCallout);
</script>
</body>
</html>
